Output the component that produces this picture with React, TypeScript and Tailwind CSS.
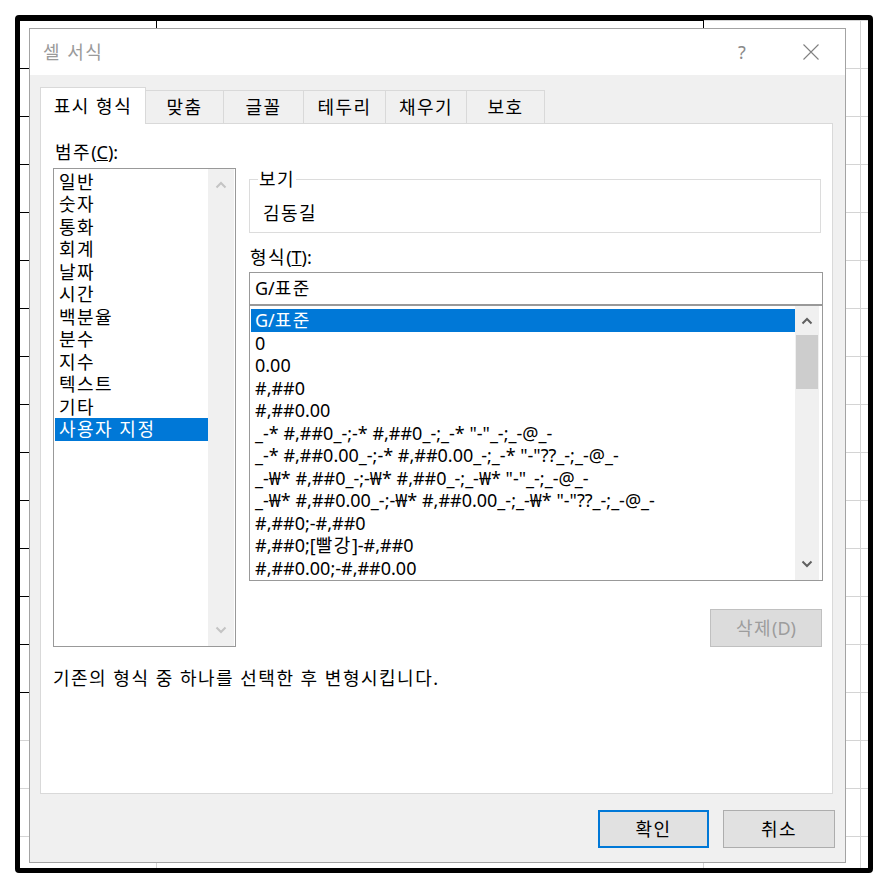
import React from "react";

const categories = [
  "일반",
  "숫자",
  "통화",
  "회계",
  "날짜",
  "시간",
  "백분율",
  "분수",
  "지수",
  "텍스트",
  "기타",
  "사용자 지정",
];

const formats = [
  "G/표준",
  "0",
  "0.00",
  "#,##0",
  "#,##0.00",
  '_-* #,##0_-;-* #,##0_-;_-* "-"_-;_-@_-',
  '_-* #,##0.00_-;-* #,##0.00_-;_-* "-"??_-;_-@_-',
  '_-₩* #,##0_-;-₩* #,##0_-;_-₩* "-"_-;_-@_-',
  '_-₩* #,##0.00_-;-₩* #,##0.00_-;_-₩* "-"??_-;_-@_-',
  "#,##0;-#,##0",
  "#,##0;[빨강]-#,##0",
  "#,##0.00;-#,##0.00",
];

const tabs = [
  { label: "맞춤", w: "w-[78px]" },
  { label: "글꼴", w: "w-[80px]" },
  { label: "테두리", w: "w-[82px]" },
  { label: "채우기", w: "w-[81px]" },
  { label: "보호", w: "w-[78px]" },
];

// 한글은 맑은 고딕 폭에 맞추려고 자간을 조금 벌림
const HANGUL = /([\uAC00-\uD7A3]+(?: [\uAC00-\uD7A3]+)*)/;

function K({ children }: { children: string }) {
  return (
    <>
      {children.split(HANGUL).map((part, i) =>
        i % 2 === 1 ? (
          <span key={i} className="tracking-[1.5px]">
            {part}
          </span>
        ) : (
          part
        )
      )}
    </>
  );
}

function Chevron({ dir, color }: { dir: "up" | "down"; color: string }) {
  return (
    <svg width="12" height="8" viewBox="0 0 12 8" fill="none">
      <path
        d={dir === "up" ? "M1.5 6.5 L6 2 L10.5 6.5" : "M1.5 1.5 L6 6 L10.5 1.5"}
        stroke={color}
        strokeWidth="2"
      />
    </svg>
  );
}

export default function App() {
  return (
    <div className="w-[888px] h-[887px] bg-white pt-[15px] pl-[15px] font-['Noto_Sans','Noto_Sans_CJK_KR',sans-serif] text-[18px] text-black">
      {/* 엑셀 시트 배경 + 손그림 테두리 */}
      <div className="w-[858px] h-[858px] border-[5px] border-black rounded-[4px] overflow-hidden bg-white [background-image:repeating-linear-gradient(to_bottom,#000_0_1px,transparent_1px_48px),linear-gradient(to_right,transparent_136px,#000_136px_137px,transparent_137px_683px,#000_683px_684px,transparent_684px),repeating-linear-gradient(to_bottom,#d4d4d4_0_1px,transparent_1px_48px),linear-gradient(to_right,transparent_136px,#d4d4d4_136px_137px,transparent_137px_683px,#d4d4d4_683px_684px,transparent_684px_840px,#d4d4d4_840px_841px,transparent_841px)] [background-size:684px_673px,684px_673px,100%_100%,100%_100%] [background-repeat:no-repeat]">
        {/* 대화상자 */}
        <div className="ml-[9px] mt-[8px] w-[817px] h-[835px] border border-[#a3a3a3] bg-[#f0f0f0] flex flex-col">
          {/* 제목 표시줄 */}
          <div className="h-[46px] shrink-0 bg-white flex items-center pl-[13px] pr-[11px]">
            <span className="text-[#9a9a9a] leading-[22px]">
              <K>셀 서식</K>
            </span>
            <span className="ml-auto w-[46px] mr-[23px] text-center text-[#8a8a8a] leading-none">?</span>
            <span className="w-[46px] flex justify-center">
              <svg width="16" height="16" viewBox="0 0 16 16">
                <path d="M0.5 0.5 L15.5 15.5 M15.5 0.5 L0.5 15.5" stroke="#808080" strokeWidth="1.1" />
              </svg>
            </span>
          </div>

          {/* 본문 */}
          <div className="flex-1 px-[10px] pt-[12px]">
            {/* 탭 */}
            <div className="flex items-end h-[36px] leading-[22px]">
              <div className="relative z-10 w-[106px] h-[37px] -mb-px border-t border-l border-r border-[#d9d9d9] bg-white flex items-center justify-center">
                <K>표시 형식</K>
              </div>
              {tabs.map((t) => (
                <div
                  key={t.label}
                  className={`${t.w} h-[33px] border-t border-r border-[#d9d9d9] bg-[#f0f0f0] flex items-center justify-center`}
                >
                  <K>{t.label}</K>
                </div>
              ))}
            </div>

            {/* 탭 패널 */}
            <div className="w-[793px] h-[671px] border border-[#d9d9d9] bg-white pl-[12px]">
              <div className="flex items-start">
                {/* 범주 */}
                <div className="w-[183px] mt-[17px] shrink-0">
                  <div className="h-[22px] leading-[22px] pl-[2px]">
                    <K>범주</K>(<span className="underline">C</span>):
                  </div>
                  <div className="mt-[5px] h-[479px] border border-[#999999] flex">
                    <div className="w-[154px] pt-[1.5px] pl-[1px] overflow-hidden">
                      {categories.map((c, i) => (
                        <div
                          key={c}
                          className={`h-[22.5px] leading-[22.5px] pl-[4px] whitespace-nowrap ${
                            i === categories.length - 1 ? "bg-[#0078d7] text-white" : ""
                          }`}
                        >
                          <K>{c}</K>
                        </div>
                      ))}
                    </div>
                    <div className="w-[26px] bg-[#f0f0f0] flex flex-col justify-between">
                      <div className="h-[32px] flex items-center justify-center">
                        <Chevron dir="up" color="#c4c4c4" />
                      </div>
                      <div className="h-[32px] flex items-center justify-center">
                        <Chevron dir="down" color="#c4c4c4" />
                      </div>
                    </div>
                  </div>
                </div>

                {/* 보기 / 형식 */}
                <div className="ml-[13px] w-[574px] mt-[55px] flex flex-col">
                  <div className="relative h-[54px] w-[572px] border border-[#dcdcdc]">
                    <span className="absolute left-[8px] -top-[12px] bg-white px-[1px] leading-[22px]">
                      <K>보기</K>
                    </span>
                    <div className="pl-[13px] pt-[22px] leading-[22px]">
                      <K>김동길</K>
                    </div>
                  </div>

                  <div className="mt-[13px] h-[22px] leading-[22px] pl-[1px]">
                    <K>형식</K>(<span className="underline">T</span>):
                  </div>

                  <div className="mt-[4px] h-[33px] border border-[#999999] pl-[5px] leading-[31px]">
                    <K>G/표준</K>
                  </div>

                  <div className="h-[276px] border border-[#999999] flex">
                    <div className="w-[545px] pt-[3px] pl-[1px] overflow-hidden">
                      {formats.map((f, i) => (
                        <div
                          key={f}
                          className={`h-[22.5px] leading-[22.5px] pl-[4px] whitespace-nowrap ${
                            i === 0 ? "bg-[#0078d7] text-white" : ""
                          }`}
                        >
                          <K>{f}</K>
                        </div>
                      ))}
                    </div>
                    <div className="w-[24px] bg-[#f0f0f0] flex flex-col">
                      <div className="h-[29px] flex items-center justify-center">
                        <Chevron dir="up" color="#606060" />
                      </div>
                      <div className="h-[54px] mx-px bg-[#cdcdcd]" />
                      <div className="mt-auto h-[32px] flex items-center justify-center">
                        <Chevron dir="down" color="#606060" />
                      </div>
                    </div>
                  </div>

                  <div className="self-end mr-px mt-[28px] w-[112px] h-[38px] border border-[#c0c0c0] bg-[#dcdcdc] text-[#9d9d9d] flex items-center justify-center leading-[22px]">
                    <span>
                      <K>삭제</K>(D)
                    </span>
                  </div>
                </div>
              </div>

              <div className="mt-[20px] h-[22px] leading-[22px]">
                <K>기존의 형식 중 하나를 선택한 후 변형시킵니다</K>.
              </div>
            </div>

            {/* 확인 / 취소 */}
            <div className="mt-[16px] flex justify-end gap-[14px] leading-[22px]">
              <div className="w-[111px] h-[38px] border-2 border-[#0078d7] bg-[#e1e1e1] flex items-center justify-center">
                <K>확인</K>
              </div>
              <div className="w-[112px] h-[38px] border border-[#adadad] bg-[#e1e1e1] flex items-center justify-center">
                <K>취소</K>
              </div>
            </div>
          </div>
        </div>
      </div>
    </div>
  );
}
